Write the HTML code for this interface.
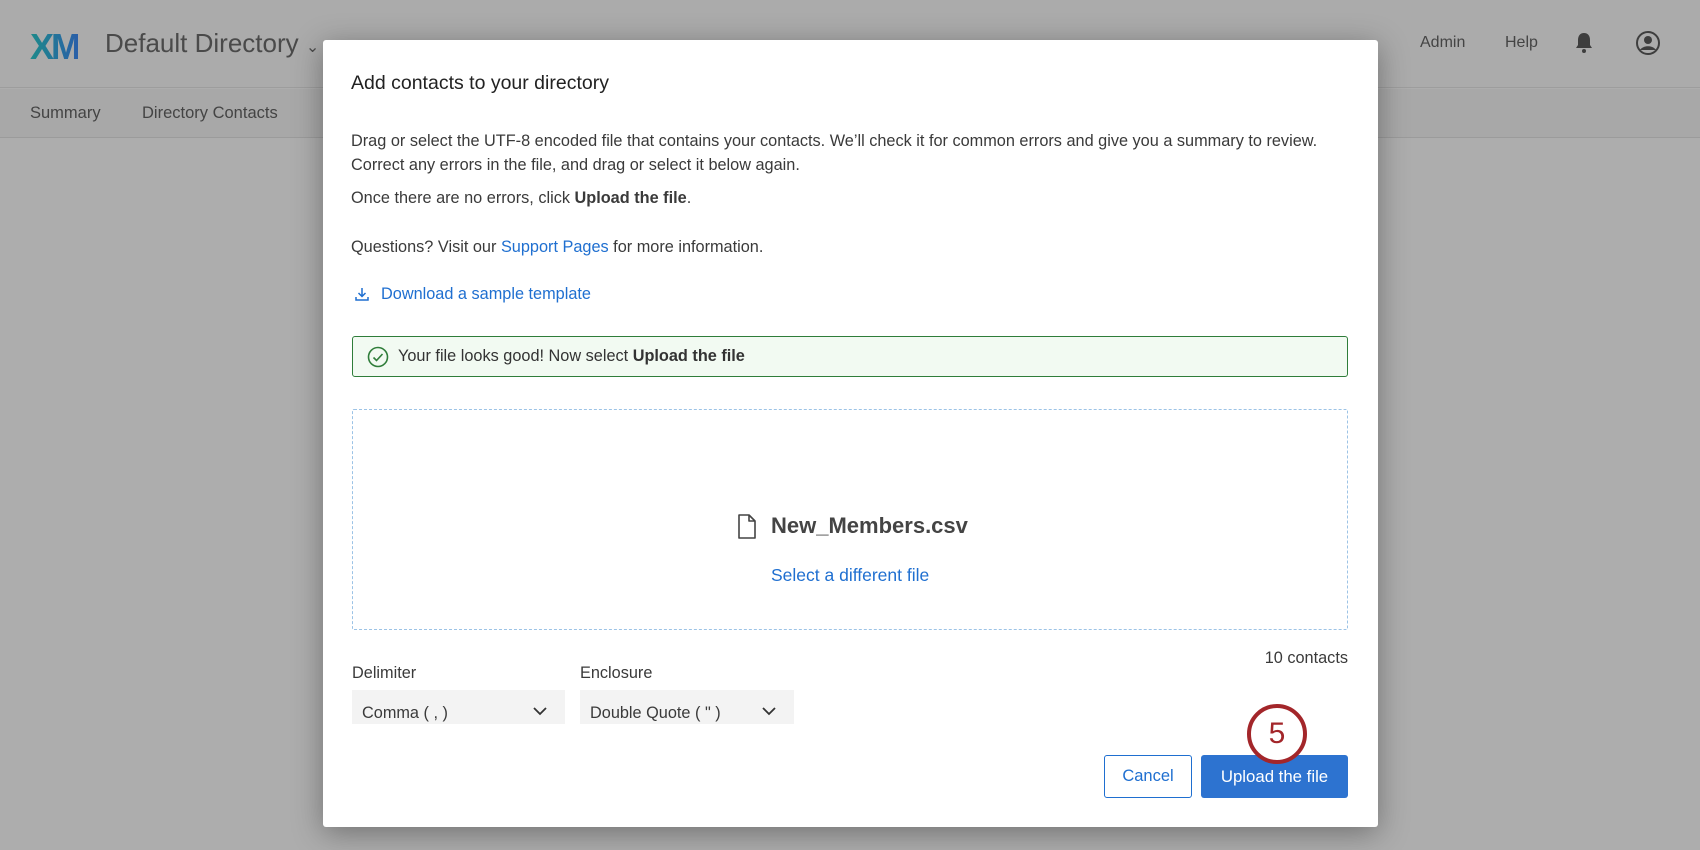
<!DOCTYPE html>
<html><head><meta charset="utf-8"><style>
*{box-sizing:border-box;margin:0;padding:0}
body{width:1700px;height:850px;overflow:hidden;background:#adadad;font-family:"Liberation Sans",sans-serif;position:relative;color:#333}
.a{position:absolute;white-space:nowrap}
.hdr{position:absolute;left:0;top:0;width:1700px;height:88px;background:#ababab;border-bottom:1px solid #9d9d9d}
.nav{position:absolute;left:0;top:89px;width:1700px;height:49px;background:#a8a8a8;border-bottom:1px solid #9b9b9b}
.modal{position:absolute;left:323px;top:40px;width:1055px;height:787px;background:#fff;border-radius:3px;box-shadow:0 6px 30px rgba(0,0,0,.35)}
.t{font-size:16.3px;color:#3a3a3a}
.link{color:#1f6fd0}
</style></head><body>
<div class="hdr"></div><div class="nav"></div>
<div class="a" style="left:30px;top:26px;font-size:36px;font-weight:bold;letter-spacing:-3px;background:linear-gradient(90deg,#1d8a8a,#2a5fa8);-webkit-background-clip:text;background-clip:text;color:transparent">XM</div>
<div class="a" style="left:105px;top:28px;font-size:26px;color:#4a4a4a">Default Directory <span style="font-size:16px">⌄</span></div>
<div class="a" style="left:1420px;top:34px;font-size:16px;color:#444">Admin</div>
<div class="a" style="left:1505px;top:34px;font-size:16px;color:#444">Help</div>
<svg class="a" style="left:1574px;top:32px" width="20" height="22" viewBox="0 0 20 22"><path d="M10 1c-4 0-6 3-6 7v5l-2 3h16l-2-3V8c0-4-2-7-6-7z" fill="#3e3e3e"/><circle cx="10" cy="19" r="2" fill="#3e3e3e"/></svg>
<svg class="a" style="left:1635px;top:30px" width="26" height="26" viewBox="0 0 26 26"><circle cx="13" cy="13" r="11" fill="none" stroke="#3e3e3e" stroke-width="2"/><circle cx="13" cy="10" r="4" fill="#3e3e3e"/><path d="M5 20c3-5 13-5 16 0" fill="#3e3e3e"/></svg>
<div class="a" style="left:30px;top:104px;font-size:16.5px;color:#444">Summary</div>
<div class="a" style="left:142px;top:104px;font-size:16.5px;color:#444">Directory Contacts</div>

<div class="modal"></div>
<div class="a" style="left:351px;top:72px;font-size:19.5px;color:#222">Add contacts to your directory</div>
<div class="a t" style="left:351px;top:132px">Drag or select the UTF-8 encoded file that contains your contacts. We’ll check it for common errors and give you a summary to review.</div>
<div class="a t" style="left:351px;top:156px">Correct any errors in the file, and drag or select it below again.</div>
<div class="a t" style="left:351px;top:189px">Once there are no errors, click <b>Upload the file</b>.</div>
<div class="a t" style="left:351px;top:238px">Questions? Visit our <span class="link">Support Pages</span> for more information.</div>
<svg class="a" style="left:354px;top:286px" width="16" height="16" viewBox="0 0 16 16"><path d="M8 2v8M4.5 7l3.5 3.5L11.5 7M2 11v3h12v-3" fill="none" stroke="#1f6fd0" stroke-width="1.5"/></svg>
<div class="a t link" style="left:381px;top:285px">Download a sample template</div>
<div class="a" style="left:352px;top:336px;width:996px;height:41px;background:#f2faf2;border:1px solid #2f7d3a;border-radius:3px"></div>
<svg class="a" style="left:367px;top:346px" width="22" height="22" viewBox="0 0 22 22"><circle cx="11" cy="11" r="9.5" fill="none" stroke="#2f7d3a" stroke-width="1.6"/><path d="M6.5 11.5l3 3 6-6.5" fill="none" stroke="#2f7d3a" stroke-width="1.6"/></svg>
<div class="a t" style="left:398px;top:347px;color:#333">Your file looks good! Now select <b>Upload the file</b></div>
<div class="a" style="left:352px;top:409px;width:996px;height:221px;border:1px dashed #9cc3e6;border-radius:2px"></div>
<svg class="a" style="left:737px;top:514px" width="20" height="26" viewBox="0 0 20 26"><path d="M2 1h10l6 6v17H2z M12 1v6h6" fill="none" stroke="#444" stroke-width="1.6" stroke-linejoin="round"/></svg>
<div class="a" style="left:771px;top:513px;font-size:22px;font-weight:bold;color:#444">New_Members.csv</div>
<div class="a link" style="left:771px;top:565px;font-size:17.5px">Select a different file</div>
<div class="a t" style="right:352px;top:649px">10 contacts</div>
<div class="a t" style="left:352px;top:664px">Delimiter</div>
<div class="a t" style="left:580px;top:664px">Enclosure</div>
<div class="a" style="left:352px;top:690px;width:213px;height:34px;background:#f3f3f3"></div>
<div class="a" style="left:580px;top:690px;width:214px;height:34px;background:#f3f3f3"></div>
<div class="a t" style="left:362px;top:704px">Comma ( , )</div>
<div class="a t" style="left:590px;top:704px">Double Quote ( " )</div>
<svg class="a" style="left:533px;top:706px" width="14" height="10" viewBox="0 0 14 10"><path d="M1 2l6 6 6-6" fill="none" stroke="#333" stroke-width="1.8"/></svg>
<svg class="a" style="left:762px;top:706px" width="14" height="10" viewBox="0 0 14 10"><path d="M1 2l6 6 6-6" fill="none" stroke="#333" stroke-width="1.8"/></svg>
<div class="a" style="left:1104px;top:755px;width:88px;height:43px;border:1px solid #1f6fd0;border-radius:3px;color:#1f6fd0;font-size:16.5px;text-align:center;line-height:41px">Cancel</div>
<div class="a" style="left:1201px;top:755px;width:147px;height:43px;background:#2d73d0;border-radius:3px;color:#fff;font-size:16.8px;text-align:center;line-height:43px">Upload the file</div>
<div class="a" style="left:1247px;top:704px;width:60px;height:60px;border:4px solid #a3262a;border-radius:50%;background:#fff;color:#a3262a;font-size:30px;text-align:center;line-height:52px">5</div>
</body></html>
